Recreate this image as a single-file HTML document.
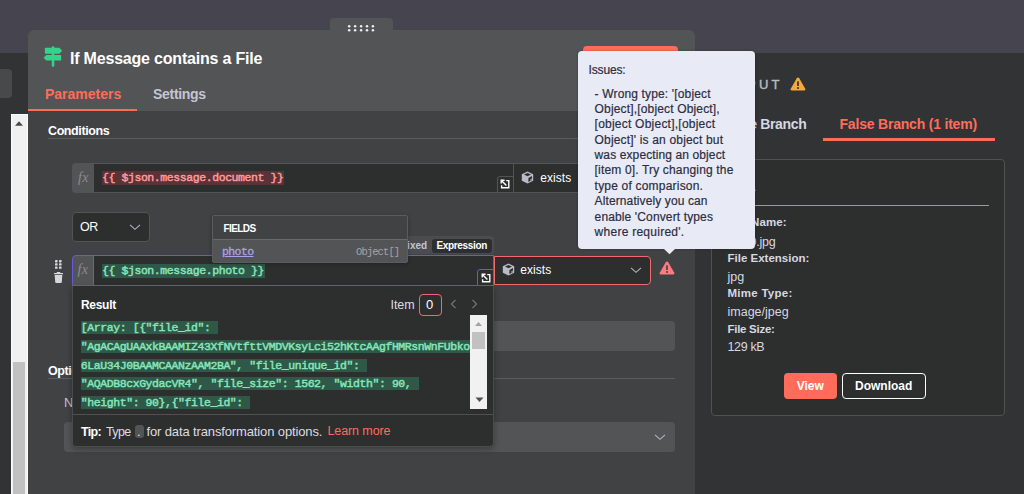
<!DOCTYPE html>
<html>
<head>
<meta charset="utf-8">
<title>If Message contains a File</title>
<style>
html,body{margin:0;padding:0;}
body{width:1024px;height:494px;overflow:hidden;background:#46454f;position:relative;font-family:"Liberation Sans",sans-serif;color:#fff;}
.abs{position:absolute;}
.t{position:absolute;white-space:nowrap;line-height:1;}
.b{font-weight:bold;}
.mono{font-family:"Liberation Mono",monospace;}
/* left panel */
#left{left:0;top:53px;width:28px;height:441px;background:#323335;}
#leftbox{left:0;top:69px;width:12px;height:29px;background:#48494b;border-radius:0 4px 4px 0;}
#lsb{left:11px;top:114px;width:17px;height:380px;background:#f0f0f0;box-sizing:border-box;border:1px solid #fcfcfc;border-bottom:0;}
#lsbthumb{left:13px;top:362px;width:12px;height:132px;background:#c1c1c1;}
/* main panel */
#main{left:28px;top:30px;width:667px;height:464px;background:#414244;border-radius:6px 6px 0 0;overflow:hidden;}
#mainhead{left:0;top:0;width:667px;height:81px;background:#535456;}
#handle{left:330px;top:18px;width:63px;height:14px;background:#535456;border-radius:4px 4px 0 0;}
.dot{position:absolute;width:2px;height:2px;background:#e6e6ea;border-radius:1px;}
/* right panel */
#right{left:695px;top:53px;width:329px;height:441px;background:#323335;}

.line{position:absolute;height:1px;background:#5b5c5e;}
.inp{position:absolute;background:#2d2e2e;box-sizing:border-box;}
.fx{position:absolute;background:#535456;box-sizing:border-box;color:#8a8b8e;font-family:"Liberation Serif",serif;font-style:italic;font-size:14px;letter-spacing:0.5px;text-align:center;}
.graybox{position:absolute;background:#535456;border-radius:4px;}

.hl{background:#2f5848;color:#7fe0b4;}
.code{position:absolute;white-space:nowrap;font-family:"Liberation Mono",monospace;font-size:11.5px;letter-spacing:-0.42px;line-height:14px;color:#86e6bb;-webkit-text-stroke:0.45px #86e6bb;}
.code span{background:#2f5848;padding:0 1px 0 0.3px;}

.rl{font-size:11.5px;color:#d6d8e2;}
.rv{font-size:12.5px;color:#d6d8e2;}
.tt{font-size:12px;color:#2c2d42;-webkit-text-stroke:0.2px #2c2d42;letter-spacing:0.2px;}
</style>
</head>
<body>
<!-- left input panel -->
<div id="left" class="abs"></div>
<div id="leftbox" class="abs"></div>
<div id="lsb" class="abs"></div>
<svg class="abs" style="left:15.3px;top:120.5px" width="8" height="5" viewBox="0 0 8 5"><path d="M0 4.8 L4 0.3 L8 4.8 Z" fill="#484848"/></svg>
<div id="lsbthumb" class="abs"></div>

<!-- right output panel -->
<div id="right" class="abs"></div>

<!-- main panel -->
<div id="handle" class="abs"></div>
<div id="main" class="abs">
  <div id="mainhead" class="abs"></div>
  <div class="abs" style="left:0;top:-1px;width:0;height:0;">
  <!-- coordinates inside #main are page coords minus (28,29) -->
  <!-- title icon: signpost -->
  <svg class="abs" style="left:15px;top:17.4px" width="20" height="21" viewBox="0 0 20 21">
    <rect x="8.8" y="0.3" width="2.5" height="20.4" rx="1" fill="#33d38a"/>
    <path d="M2.6 1.8 H16.4 L19.1 4.8 L16.4 7.8 H2.6 Q1.9 7.8 1.9 7.1 V2.5 Q1.9 1.8 2.6 1.8 Z" fill="#33d38a"/>
    <path d="M17.5 9 H3.3 L0.6 11.7 L3.3 14.4 H17.5 Q18.2 14.4 18.2 13.7 V9.7 Q18.2 9 17.5 9 Z" fill="#33d38a"/>
  </svg>
  <div class="t b" id="title" style="left:42px;top:22px;font-size:16px;letter-spacing:-0.2px;">If Message contains a File</div>
  <div class="t b" id="tabParams" style="left:17px;top:58px;font-size:14px;color:#ff6d5a;">Parameters</div>
  <div class="abs" style="left:0;top:80px;width:109px;height:2px;background:#ff6d5a;"></div>
  <div class="t b" id="tabSettings" style="left:125px;top:58px;font-size:14px;letter-spacing:-0.3px;color:#c3c5d2;">Settings</div>
  <!-- red execute button (mostly hidden by tooltip) -->
  <div class="abs" style="left:555px;top:17px;width:95px;height:30px;background:#ff6d5a;border-radius:4px;"></div>

  <!-- ===== content (page coords minus 28,29) ===== -->
  <div class="t b" id="conditions" style="left:20px;top:95.7px;font-size:12.5px;letter-spacing:-0.4px;">Conditions</div>
  <div class="line" style="left:20px;top:109px;width:627px;"></div>

  <!-- row 1 -->
  <div class="fx" style="left:44px;top:134px;width:23px;height:30px;border-radius:4px 0 0 4px;line-height:29px;">fx</div>
  <div class="inp" style="left:66px;top:134px;width:419px;height:30px;border-top:1px solid #535456;border-bottom:1px solid #535456;"></div>
  <div class="t mono" id="expr1" style="left:74px;top:142px;font-size:11.5px;letter-spacing:-0.42px;color:#ff9b9b;-webkit-text-stroke:0.45px #ff9b9b;background:#5a3238;line-height:14px;padding:0 1px 0 0;">{{ $json.message.document }}</div>
  <div class="abs" style="left:469px;top:147px;width:17px;height:17px;box-sizing:border-box;border:1px solid #535456;border-radius:3px 0 0 0;background:#2d2e2e;"></div>
  <svg class="abs" style="left:472px;top:150px" width="10" height="10" viewBox="0 0 10 10" fill="none" stroke="#fff" stroke-width="1.4"><path d="M1.2 4.6 V1.2 H4.6 M1.4 1.4 L6.4 6.4"/><path d="M6.2 1.6 H8.8 V8.8 H1.6 V6.2"/></svg>
  <div class="inp" style="left:485px;top:134px;width:141px;height:30px;border:1px solid #535456;border-radius:0 4px 4px 0;"></div>
  <svg class="abs" id="cube1" style="left:492.5px;top:141.7px" width="13" height="13" viewBox="0 0 13 13"><path d="M6.5 0.4 L12.2 3.2 V9.8 L6.5 12.6 L0.8 9.8 V3.2 Z" fill="#b9bbc6"/><path d="M6.5 1.9 L10 3.6 L6.5 5.3 L3 3.6 Z" fill="#2d2e2e"/><path d="M7.4 6.9 L11 5.1 V9.1 L7.4 10.9 Z" fill="#2d2e2e"/><path d="M9.2 8.2 L11 7.3 V9.1 L9.2 10 Z" fill="#8a8c95"/></svg>
  <div class="t" id="exists1" style="left:512.3px;top:143px;font-size:12px;letter-spacing:0.05px;">exists</div>

  <!-- OR select -->
  <div class="inp" style="left:44px;top:183px;width:78px;height:30px;border:1px solid #535456;border-radius:4px;"></div>
  <div class="t" id="or" style="left:52px;top:192px;font-size:12.5px;letter-spacing:-0.5px;">OR</div>
  <svg class="abs" style="left:101px;top:194px" width="12" height="8" viewBox="0 0 12 8" fill="none" stroke="#b0b2ba" stroke-width="1.1"><path d="M1 1.8 L6 6.3 L11 1.8"/></svg>

  <!-- boxes behind result dropdown -->
  <div class="graybox" style="left:44px;top:292px;width:603px;height:30px;"></div>
  <div class="t b" id="options" style="left:20px;top:335.5px;font-size:12.5px;letter-spacing:-0.4px;">Options</div>
  <div class="line" style="left:20px;top:349px;width:627px;"></div>
  <div class="t" id="noprops" style="left:36px;top:367px;font-size:13px;color:#c3c5d2;">No properties</div>
  <div class="graybox" style="left:36px;top:393px;width:611px;height:30px;"></div>
  <svg class="abs" style="left:626px;top:404px" width="12" height="8" viewBox="0 0 12 8" fill="none" stroke="#b0b2ba" stroke-width="1.1"><path d="M1 1.8 L6 6.3 L11 1.8"/></svg>

  <!-- row 2 -->
  <svg class="abs" style="left:27px;top:231px" width="7" height="9" viewBox="0 0 7 9" fill="#d6d7dc"><rect x="0" y="0" width="2.6" height="2.4" rx="0.6"/><rect x="4" y="0" width="2.6" height="2.4" rx="0.6"/><rect x="0" y="3.2" width="2.6" height="2.4" rx="0.6"/><rect x="4" y="3.2" width="2.6" height="2.4" rx="0.6"/><rect x="0" y="6.4" width="2.6" height="2.4" rx="0.6"/><rect x="4" y="6.4" width="2.6" height="2.4" rx="0.6"/></svg>
  <svg class="abs" style="left:26px;top:243px" width="9" height="11" viewBox="0 0 9 11" fill="#d6d7dc"><path d="M3 0 H6 L6.5 1 H9 V2.2 H0 V1 H2.5 Z"/><path d="M0.7 3 H8.3 L7.8 10 Q7.7 11 6.8 11 H2.2 Q1.3 11 1.2 10 Z"/></svg>
  <div class="fx" style="left:44px;top:226px;width:22px;height:31px;border-radius:4px 0 0 0;line-height:28px;border:1px solid #6858da;">fx</div>
  <div class="inp" style="left:65px;top:226px;width:401px;height:31px;border:1px solid #6858da;"></div>
  <div class="t mono" id="expr2" style="left:74px;top:235px;font-size:11.5px;letter-spacing:-0.42px;color:#86e6bb;-webkit-text-stroke:0.45px #86e6bb;background:#2f5848;line-height:14px;padding:0 1px 0 0;">{{ $json.message.photo }}</div>
  <div class="abs" style="left:449px;top:240px;width:17px;height:17px;box-sizing:border-box;border:1px solid #6858da;border-radius:3px 0 0 0;background:#2d2e2e;"></div>
  <svg class="abs" style="left:453px;top:244px" width="10" height="10" viewBox="0 0 10 10" fill="none" stroke="#fff" stroke-width="1.4"><path d="M1.2 4.6 V1.2 H4.6 M1.4 1.4 L6.4 6.4"/><path d="M6.2 1.6 H8.8 V8.8 H1.6 V6.2"/></svg>
  <div class="inp" style="left:466px;top:227px;width:157px;height:29px;border:1px solid #f2686c;border-radius:0 4px 4px 0;"></div>
  <svg class="abs" id="cube2" style="left:473.5px;top:234.3px" width="13" height="13" viewBox="0 0 13 13"><path d="M6.5 0.4 L12.2 3.2 V9.8 L6.5 12.6 L0.8 9.8 V3.2 Z" fill="#b9bbc6"/><path d="M6.5 1.9 L10 3.6 L6.5 5.3 L3 3.6 Z" fill="#2d2e2e"/><path d="M7.4 6.9 L11 5.1 V9.1 L7.4 10.9 Z" fill="#2d2e2e"/><path d="M9.2 8.2 L11 7.3 V9.1 L9.2 10 Z" fill="#8a8c95"/></svg>
  <div class="t" id="exists2" style="left:492.3px;top:235px;font-size:12px;letter-spacing:0.05px;">exists</div>
  <svg class="abs" style="left:602px;top:237px" width="12" height="8" viewBox="0 0 12 8" fill="none" stroke="#b0b2ba" stroke-width="1.1"><path d="M1 1.8 L6 6.3 L11 1.8"/></svg>
  <!-- warning icon -->
  <svg class="abs" id="warn2" style="left:630.7px;top:232px" width="16" height="14" viewBox="0 0 17 15"><path d="M8.5 0.6 Q9.3 0.6 9.8 1.4 L16.3 12.6 Q17 14.4 15.2 14.5 H1.8 Q0 14.4 0.7 12.6 L7.2 1.4 Q7.7 0.6 8.5 0.6 Z" fill="#ff7a80"/><rect x="7.6" y="4.6" width="1.8" height="5" rx="0.6" fill="#414244"/><circle cx="8.5" cy="11.8" r="1.1" fill="#414244"/></svg>

  <!-- Fixed / Expression toggle -->
  <div class="abs" style="left:366px;top:207px;width:99.5px;height:18px;background:#4b4c4e;border-radius:4px;"></div>
  <div class="t b" id="fixed" style="left:373px;top:212px;font-size:10px;color:#c3c5d2;">Fixed</div>
  <div class="abs" style="left:404px;top:210px;width:59.5px;height:14px;background:#2d2e2e;border-radius:3px;"></div>
  <div class="t b" id="expression" style="left:408.5px;top:212px;font-size:10px;letter-spacing:-0.35px;color:#fff;">Expression</div>

  <!-- autocomplete popup -->
  <div class="abs" id="ac" style="left:184px;top:186px;width:196px;height:48px;background:#535456;box-shadow:0 1px 4px rgba(0,0,0,0.25);border:1px solid #5b5c5e;box-sizing:border-box;border-radius:2px;">
    <div class="abs" style="left:0;top:0;width:194px;height:23px;background:#414244;border-bottom:1px solid #68696b;"></div>
  </div>
  <div class="t b" id="fields" style="left:195.5px;top:194.5px;font-size:10px;letter-spacing:-0.6px;">FIELDS</div>
  <div class="t mono" id="photo" style="left:194px;top:217px;font-size:11.5px;letter-spacing:-0.6px;color:#aaa3e8;-webkit-text-stroke:0.3px #aaa3e8;text-decoration:underline;">photo</div>
  <div class="t mono" id="objarr" style="left:328px;top:218px;font-size:10.5px;letter-spacing:-0.9px;color:#a3a4a8;">Object[]</div>

  <!-- result dropdown -->
  <div class="abs" id="result" style="left:44px;top:257px;width:422px;height:161px;background:#2d2e2e;box-sizing:border-box;border:1px solid #4a4b4d;border-top:0;border-radius:0 0 4px 4px;box-shadow:0 2px 6px rgba(0,0,0,0.3);"></div>
  <div class="t b" id="resultlbl" style="left:53px;top:270px;font-size:12px;letter-spacing:-0.3px;">Result</div>
  <div class="t" id="item" style="left:362.5px;top:269.5px;font-size:12.5px;letter-spacing:-0.05px;color:#dcdde3;">Item</div>
  <div class="abs" style="left:391px;top:265px;width:23px;height:22px;box-sizing:border-box;border:1px solid #f2686c;border-radius:4px;background:#2d2e2e;"></div>
  <div class="t" id="zero" style="left:398px;top:269px;font-size:13px;">0</div>
  <svg class="abs" style="left:422px;top:270px" width="7" height="10" viewBox="0 0 7 10" fill="none" stroke="#6f7074" stroke-width="1.3"><path d="M5.5 1 L1.5 5 L5.5 9"/></svg>
  <svg class="abs" style="left:443px;top:270px" width="7" height="10" viewBox="0 0 7 10" fill="none" stroke="#6f7074" stroke-width="1.3"><path d="M1.5 1 L5.5 5 L1.5 9"/></svg>

  <div class="code" style="left:52.5px;top:292px;"><span>[Array: [{"file_id":&nbsp;</span></div>
  <div class="code" style="left:52.5px;top:311px;"><span>"AgACAgUAAxkBAAMIZ43XfNVtfttVMDVKsyLci52hKtcAAgfHMRsnWnFUbko</span></div>
  <div class="code" style="left:52.5px;top:330px;"><span>6LaU34J0BAAMCAANzAAM2BA", "file_unique_id":&nbsp;</span></div>
  <div class="code" style="left:52.5px;top:348px;"><span>"AQADB8cxGydacVR4", "file_size": 1562, "width": 90,&nbsp;</span></div>
  <div class="code" style="left:52.5px;top:367px;"><span>"height": 90},{"file_id":&nbsp;</span></div>

  <!-- result scrollbar -->
  <div class="abs" style="left:442px;top:286px;width:17px;height:94px;background:#f1f1f1;"></div>
  <svg class="abs" style="left:447px;top:293px" width="7" height="4" viewBox="0 0 7 4"><path d="M0 4 L3.5 0 L7 4 Z" fill="#a3a3a3"/></svg>
  <svg class="abs" style="left:447px;top:368px" width="9" height="6" viewBox="0 0 9 6"><path d="M0.5 0.5 L4.5 5 L8.5 0.5 Z" fill="#505050"/></svg>
  <div class="abs" style="left:444px;top:303px;width:13px;height:17px;background:#c1c1c1;"></div>

  <div class="line" style="left:45px;top:385px;width:420px;background:#4f5052;"></div>
  <div class="t b" id="tip1" style="left:53px;top:396.5px;font-size:12.5px;letter-spacing:-0.7px;">Tip:</div>
  <div class="t" id="tip2" style="left:78px;top:396.5px;font-size:12.5px;letter-spacing:-0.6px;color:#dcdde3;">Type</div>
  <div class="abs" style="left:106.5px;top:396px;width:9px;height:13px;background:#535456;border-radius:3px;"></div>
  <div class="t" id="tip3" style="left:109px;top:396px;font-size:13px;color:#dcdde3;">.</div>
  <div class="t" id="tip4" style="left:118.5px;top:396px;font-size:13px;letter-spacing:-0.13px;color:#dcdde3;">for data transformation options.</div>
  <div class="t" id="tip5" style="left:299.5px;top:396.4px;font-size:12.5px;letter-spacing:-0.1px;color:#ff6d5a;">Learn more</div>
</div>
</div>

<svg class="abs" style="left:340px;top:20px" width="44" height="16" viewBox="0 0 44 16"><circle cx="9.2" cy="6.3" r="1.25" fill="#eeeef2"/><circle cx="9.2" cy="10.3" r="1.25" fill="#eeeef2"/><circle cx="15.1" cy="6.3" r="1.25" fill="#eeeef2"/><circle cx="15.1" cy="10.3" r="1.25" fill="#eeeef2"/><circle cx="21.1" cy="6.3" r="1.25" fill="#eeeef2"/><circle cx="21.1" cy="10.3" r="1.25" fill="#eeeef2"/><circle cx="27.0" cy="6.3" r="1.25" fill="#eeeef2"/><circle cx="27.0" cy="10.3" r="1.25" fill="#eeeef2"/><circle cx="32.9" cy="6.3" r="1.25" fill="#eeeef2"/><circle cx="32.9" cy="10.3" r="1.25" fill="#eeeef2"/></svg>
<!-- ===== right panel content (page coords) ===== -->
<div class="t" id="output" style="left:710px;top:77.5px;font-size:13px;letter-spacing:3.2px;color:#b9bbc5;-webkit-text-stroke:0.4px #b9bbc5;">OUTPUT</div>
<svg class="abs" id="warnout" style="left:790px;top:77px" width="16" height="14" viewBox="0 0 17 15"><path d="M8.5 0.6 Q9.3 0.6 9.8 1.4 L16.3 12.6 Q17 14.4 15.2 14.5 H1.8 Q0 14.4 0.7 12.6 L7.2 1.4 Q7.7 0.6 8.5 0.6 Z" fill="#f5a83b"/><rect x="7.6" y="4.6" width="1.8" height="5" rx="0.6" fill="#2d2e2e"/><circle cx="8.5" cy="11.8" r="1.1" fill="#2d2e2e"/></svg>
<div class="t b" id="truebranch" style="left:728.5px;top:117px;font-size:14px;letter-spacing:-0.35px;color:#d6d8e3;">True Branch</div>
<div class="t b" id="falsebranch" style="left:839.5px;top:117px;font-size:14px;letter-spacing:-0.2px;color:#ff6d5a;">False Branch (1 item)</div>
<div class="abs" style="left:823px;top:138px;width:171.5px;height:3px;background:#ff6d5a;"></div>

<div class="abs" id="card" style="left:711px;top:159px;width:294px;height:257px;box-sizing:border-box;border:1px solid #505153;border-radius:4px;background:#2d2e2e;"></div>
<div class="t b" id="bintitle" style="left:724.5px;top:178px;font-size:15px;color:#ff6d5a;">data</div>
<div class="abs" style="left:727px;top:205px;width:262px;height:1px;background:#9a9ba0;"></div>
<div class="t b rl" id="rl0" style="left:727.5px;top:217.0px;letter-spacing:0.11px;">File Name:</div>
<div class="t rv" id="rv0" style="left:727.5px;top:235.6px;letter-spacing:-0.20px;">file_0.jpg</div>
<div class="t b rl" id="rl1" style="left:727.5px;top:252.6px;">File Extension:</div>
<div class="t rv" id="rv1" style="left:727.5px;top:271.1px;">jpg</div>
<div class="t b rl" id="rl2" style="left:727.5px;top:287.9px;letter-spacing:0.26px;">Mime Type:</div>
<div class="t rv" id="rv2" style="left:727.5px;top:305.6px;">image/jpeg</div>
<div class="t b rl" id="rl3" style="left:727.5px;top:323.8px;letter-spacing:-0.28px;">File Size:</div>
<div class="t rv" id="rv3" style="left:727.5px;top:341.2px;letter-spacing:-0.35px;">129 kB</div>
<div class="abs" style="left:784px;top:373px;width:53px;height:26px;background:#ff6d5a;border-radius:4px;"></div>
<div class="t b" id="view" style="left:796.7px;top:380px;font-size:12px;">View</div>
<div class="abs" style="left:842px;top:373px;width:84px;height:26px;box-sizing:border-box;border:1px solid #fff;border-radius:4px;"></div>
<div class="t b" id="download" style="left:855px;top:380px;font-size:12px;">Download</div>

<!-- ===== tooltip ===== -->
<div class="abs" id="tooltip" style="left:578px;top:51px;width:177px;height:198px;background:#e8ebf5;border-radius:4px;box-shadow:0 0 3px rgba(0,0,0,0.25);"></div>
<svg class="abs" style="left:664px;top:249px" width="11" height="6" viewBox="0 0 11 6"><path d="M0 0 H11 L5.5 5.2 Z" fill="#e8ebf5"/></svg>
<div class="t tt" id="tt0" style="left:588.6px;top:64.2px;letter-spacing:-0.17px;">Issues:</div>
<div class="t tt" id="tt1" style="left:594.6px;top:87.6px;letter-spacing:0.15px;">- Wrong type: '[object</div>
<div class="t tt" id="tt2" style="left:594.6px;top:103.0px;letter-spacing:0.16px;">Object],[object Object],</div>
<div class="t tt" id="tt3" style="left:594.6px;top:118.3px;letter-spacing:0.23px;">[object Object],[object</div>
<div class="t tt" id="tt4" style="left:594.6px;top:133.7px;letter-spacing:0.17px;">Object]' is an object but</div>
<div class="t tt" id="tt5" style="left:594.6px;top:149.0px;letter-spacing:0.11px;">was expecting an object</div>
<div class="t tt" id="tt6" style="left:594.6px;top:164.4px;letter-spacing:0.16px;">[item 0]. Try changing the</div>
<div class="t tt" id="tt7" style="left:594.6px;top:179.8px;letter-spacing:0.20px;">type of comparison.</div>
<div class="t tt" id="tt8" style="left:594.6px;top:195.1px;letter-spacing:0.11px;">Alternatively you can</div>
<div class="t tt" id="tt9" style="left:594.6px;top:210.5px;letter-spacing:0.13px;">enable 'Convert types</div>
<div class="t tt" id="tt10" style="left:594.6px;top:225.8px;letter-spacing:0.26px;">where required'.</div>
</body>
</html>
